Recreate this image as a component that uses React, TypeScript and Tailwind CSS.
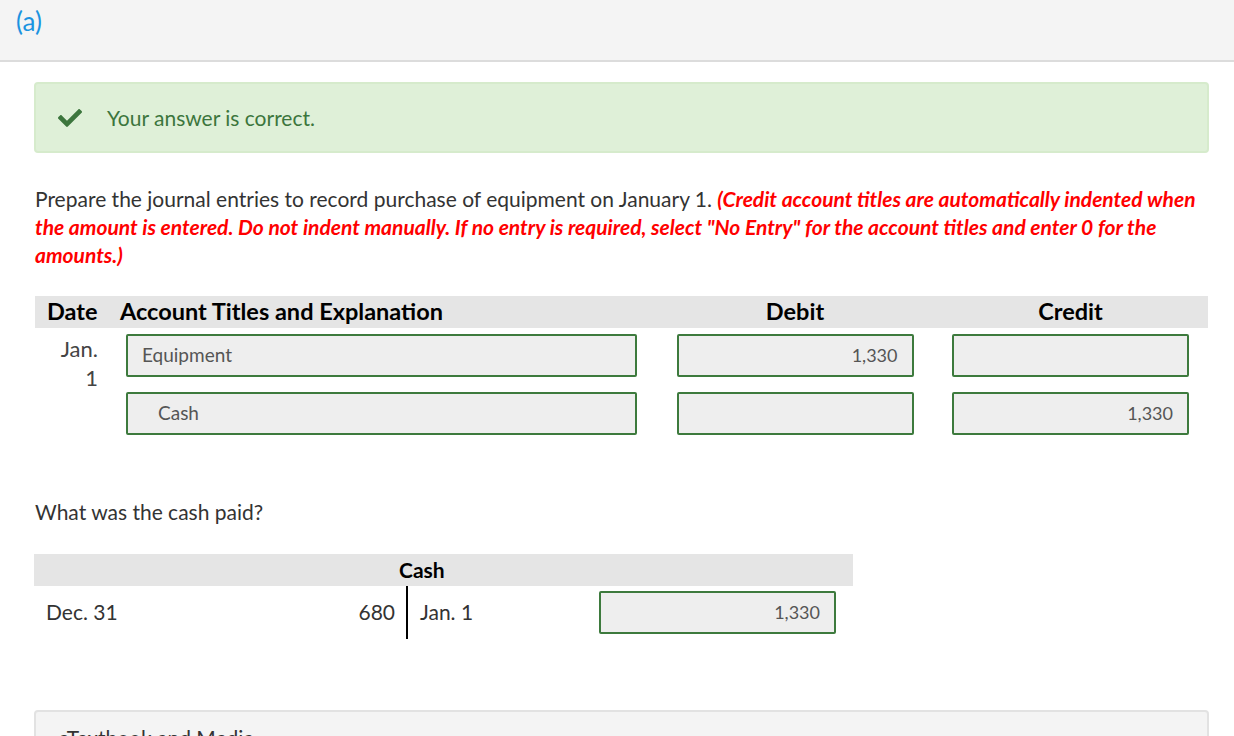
const font = { fontFamily: "Lato, 'Open Sans', sans-serif" };

function Field({ text, align = "left", indent = false, width }: { text?: string; align?: "left" | "right"; indent?: boolean; width: string }) {
  return (
    <div
      className={`${width} h-[43px] border-2 border-[#3d7a3d] rounded-[2px] bg-[#eeeeee] flex items-center text-[#555] ${
        align === "right" ? "justify-end pr-[14px] text-[18px]" : indent ? "pl-[30px] text-[19px]" : "pl-[14px] text-[19px]"
      }`}
    >
      {text}
    </div>
  );
}

function CheckIcon() {
  return (
    <svg viewBox="0 0 512 512" className="w-[24px] h-[24px]" fill="#3c763d">
      <path d="M173.898 439.404l-166.4-166.4c-9.997-9.997-9.997-26.206 0-36.204l36.203-36.204c9.997-9.998 26.207-9.998 36.204 0L192 312.69 432.095 72.596c9.997-9.997 26.207-9.997 36.204 0l36.203 36.204c9.997 9.997 9.997 26.206 0 36.204l-294.4 294.401c-9.998 9.997-26.207 9.997-36.204-.001z" />
    </svg>
  );
}

export default function App() {
  return (
    <div className="w-[1234px] h-[736px] overflow-hidden bg-white text-[#333]" style={font}>
      <div className="h-[62px] bg-[#f4f4f4] border-b-2 border-[#dcdcdc] pl-[16px] pt-[2px]">
        <span className="text-[26px] text-[#1b93e0]">(a)</span>
      </div>

      <div className="ml-[34px] mr-[25px] mt-[20px] h-[71px] bg-[#dff0d8] border-2 border-[#d6ebcc] rounded-[4px] flex items-center">
        <div className="ml-[22px]"><CheckIcon /></div>
        <span className="ml-[25px] text-[21px] text-[#3c763d]">Your answer is correct.</span>
      </div>

      <p className="ml-[35px] w-[1172px] mt-[32px] text-[21px] leading-[28px] text-[#333]">
        Prepare the journal entries to record purchase of equipment on January 1.{" "}
        <span className="text-[#ff0000] font-bold italic">
          (Credit account titles are automatically indented when the amount is entered. Do not indent manually. If no entry is required, select "No Entry" for the account titles and enter 0 for the amounts.)
        </span>
      </p>

      <div className="ml-[35px] w-[1173px] mt-[27px]">
        <div className="h-[32px] bg-[#e5e5e5] flex items-center text-[23.5px] font-bold text-black">
          <div className="w-[85px] pl-[12px]">Date</div>
          <div className="w-[537px]">Account Titles and Explanation</div>
          <div className="w-[276px] text-center">Debit</div>
          <div className="w-[275px] text-center">Credit</div>
        </div>
        <div className="flex mt-[6px] h-[43px]">
          <div className="w-[85px] pr-[22px] text-right text-[22px] leading-[29px] text-[#444]">
            Jan.
            <br />1
          </div>
          <div className="w-[537px] pl-[6px]"><Field width="w-[511px]" text="Equipment" /></div>
          <div className="w-[276px] flex justify-center"><Field width="w-[237px]" text="1,330" align="right" /></div>
          <div className="w-[275px] flex justify-center"><Field width="w-[237px]" /></div>
        </div>
        <div className="flex mt-[15px]">
          <div className="w-[85px]" />
          <div className="w-[537px] pl-[6px]"><Field width="w-[511px]" text="Cash" indent /></div>
          <div className="w-[276px] flex justify-center"><Field width="w-[237px]" /></div>
          <div className="w-[275px] flex justify-center"><Field width="w-[237px]" text="1,330" align="right" /></div>
        </div>
      </div>

      <p className="ml-[35px] mt-[63px] text-[21px] leading-[28px]">What was the cash paid?</p>

      <div className="ml-[34px] w-[819px] mt-[28px]">
        <div className="h-[32px] bg-[#e5e5e5] flex items-center pl-[365px] text-[21px] font-bold text-black">Cash</div>
        <div className="flex text-[21px] text-[#333]">
          <div className="w-[372px] flex items-center justify-between pl-[12px] pr-[11px] h-[53px] pb-[2px]">
            <span>Dec. 31</span>
            <span>680</span>
          </div>
          <div className="w-[2px] h-[53px] bg-black" />
          <div className="w-[191px] pl-[12px] flex items-center h-[53px] pb-[2px]">Jan. 1</div>
          <div className="mt-[5px]"><Field width="w-[237px]" text="1,330" align="right" /></div>
        </div>
      </div>

      <div className="ml-[34px] mr-[25px] mt-[71px] h-[80px] bg-[#f4f4f4] border-2 border-[#e2e2e2] rounded-[4px] pl-[22px] pt-[12px] text-[21px] leading-[28px] text-[#333]">
        eTextbook and Media
      </div>
    </div>
  );
}
